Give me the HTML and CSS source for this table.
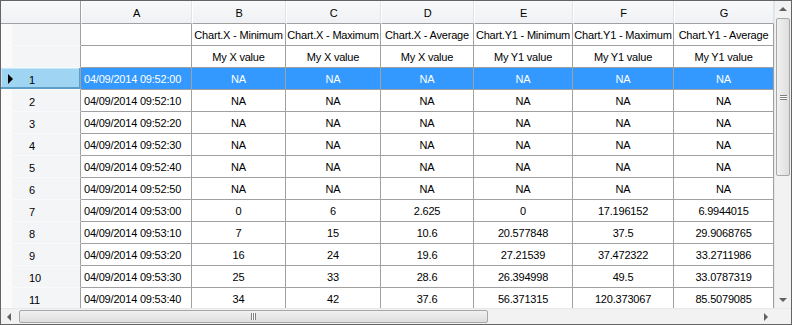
FILE: index.html
```html
<!DOCTYPE html>
<html lang="en">
<head>
    <meta charset="UTF-8">
    <title>Chart data grid</title>
    <link rel="stylesheet" href="styles.css">
</head>
<body>
    <div class="grid-view">
        <div class="grid-body">
            <div class="viewport">
                <div class="row col-head">
                    <div class="cell corner"></div>
                    <div class="cell">A</div>
                    <div class="cell">B</div>
                    <div class="cell">C</div>
                    <div class="cell">D</div>
                    <div class="cell">E</div>
                    <div class="cell">F</div>
                    <div class="cell">G</div>
                </div>
                <div class="row">
                    <div class="cell row-head"></div>
                    <div class="cell"></div>
                    <div class="cell">Chart.X - Minimum</div>
                    <div class="cell">Chart.X - Maximum</div>
                    <div class="cell">Chart.X - Average</div>
                    <div class="cell">Chart.Y1 - Minimum</div>
                    <div class="cell">Chart.Y1 - Maximum</div>
                    <div class="cell">Chart.Y1 - Average</div>
                </div>
                <div class="row">
                    <div class="cell row-head"></div>
                    <div class="cell"></div>
                    <div class="cell">My X value</div>
                    <div class="cell">My X value</div>
                    <div class="cell">My X value</div>
                    <div class="cell">My Y1 value</div>
                    <div class="cell">My Y1 value</div>
                    <div class="cell">My Y1 value</div>
                </div>
                <div class="row selected">
                    <div class="cell row-head"><span class="pointer"></span>1</div>
                    <div class="cell date">04/09/2014 09:52:00</div>
                    <div class="cell">NA</div><div class="cell">NA</div><div class="cell">NA</div>
                    <div class="cell">NA</div><div class="cell">NA</div><div class="cell">NA</div>
                </div>
                <div class="row">
                    <div class="cell row-head">2</div>
                    <div class="cell date">04/09/2014 09:52:10</div>
                    <div class="cell">NA</div><div class="cell">NA</div><div class="cell">NA</div>
                    <div class="cell">NA</div><div class="cell">NA</div><div class="cell">NA</div>
                </div>
                <div class="row">
                    <div class="cell row-head">3</div>
                    <div class="cell date">04/09/2014 09:52:20</div>
                    <div class="cell">NA</div><div class="cell">NA</div><div class="cell">NA</div>
                    <div class="cell">NA</div><div class="cell">NA</div><div class="cell">NA</div>
                </div>
                <div class="row">
                    <div class="cell row-head">4</div>
                    <div class="cell date">04/09/2014 09:52:30</div>
                    <div class="cell">NA</div><div class="cell">NA</div><div class="cell">NA</div>
                    <div class="cell">NA</div><div class="cell">NA</div><div class="cell">NA</div>
                </div>
                <div class="row">
                    <div class="cell row-head">5</div>
                    <div class="cell date">04/09/2014 09:52:40</div>
                    <div class="cell">NA</div><div class="cell">NA</div><div class="cell">NA</div>
                    <div class="cell">NA</div><div class="cell">NA</div><div class="cell">NA</div>
                </div>
                <div class="row">
                    <div class="cell row-head">6</div>
                    <div class="cell date">04/09/2014 09:52:50</div>
                    <div class="cell">NA</div><div class="cell">NA</div><div class="cell">NA</div>
                    <div class="cell">NA</div><div class="cell">NA</div><div class="cell">NA</div>
                </div>
                <div class="row">
                    <div class="cell row-head">7</div>
                    <div class="cell date">04/09/2014 09:53:00</div>
                    <div class="cell">0</div><div class="cell">6</div><div class="cell">2.625</div>
                    <div class="cell">0</div><div class="cell">17.196152</div><div class="cell">6.9944015</div>
                </div>
                <div class="row">
                    <div class="cell row-head">8</div>
                    <div class="cell date">04/09/2014 09:53:10</div>
                    <div class="cell">7</div><div class="cell">15</div><div class="cell">10.6</div>
                    <div class="cell">20.577848</div><div class="cell">37.5</div><div class="cell">29.9068765</div>
                </div>
                <div class="row">
                    <div class="cell row-head">9</div>
                    <div class="cell date">04/09/2014 09:53:20</div>
                    <div class="cell">16</div><div class="cell">24</div><div class="cell">19.6</div>
                    <div class="cell">27.21539</div><div class="cell">37.472322</div><div class="cell">33.2711986</div>
                </div>
                <div class="row">
                    <div class="cell row-head">10</div>
                    <div class="cell date">04/09/2014 09:53:30</div>
                    <div class="cell">25</div><div class="cell">33</div><div class="cell">28.6</div>
                    <div class="cell">26.394998</div><div class="cell">49.5</div><div class="cell">33.0787319</div>
                </div>
                <div class="row">
                    <div class="cell row-head">11</div>
                    <div class="cell date">04/09/2014 09:53:40</div>
                    <div class="cell">34</div><div class="cell">42</div><div class="cell">37.6</div>
                    <div class="cell">56.371315</div><div class="cell">120.373067</div><div class="cell">85.5079085</div>
                </div>
            </div>

            <div class="vscroll">
                <div class="arrow up"><span></span></div>
                <div class="track">
                    <div class="thumb"><span class="grip"></span></div>
                </div>
                <div class="arrow down"><span></span></div>
            </div>
        </div>

        <div class="hscroll">
            <div class="arrow left"><span></span></div>
            <div class="track">
                <div class="thumb"><span class="grip"></span></div>
            </div>
            <div class="arrow right"><span></span></div>
            <div class="scroll-corner"></div>
        </div>
    </div>
</body>
</html>
```

FILE: styles.css
```css
:root {
    --line: #a0a0a0;
    --head: #f4f5f7;
    --select: #3399ff;
    --track: #f2f2f2;
}

* {
    margin: 0;
    padding: 0;
    box-sizing: border-box;
}

body {
    background-color: #ffffff;
    font-family: 'Liberation Sans', Arial, sans-serif;
    font-size: 11px;
    color: #000000;
}

.grid-view {
    width: 792px;
    height: 325px;
    border: 1px solid #646464;
    display: flex;
    flex-direction: column;
    background-color: #ffffff;
}

.grid-body {
    display: flex;
    height: 307px;
}

.viewport {
    width: 773px;
    overflow: hidden;
}

.row {
    display: grid;
    grid-template-columns: 80px 111px 94px 95px 93px 99px 101px 100px;
    height: 22px;
}

.cell {
    display: flex;
    align-items: center;
    justify-content: center;
    white-space: nowrap;
    overflow: hidden;
    border-right: 1px solid var(--line);
    border-bottom: 1px solid var(--line);
    letter-spacing: -0.2px;
}

.cell.date {
    justify-content: flex-start;
    padding-left: 3px;
}

/* column headers */
.col-head {
    height: 23px;
}

.col-head .cell {
    background: linear-gradient(#f8f9fa, #eff1f4);
    border-right: 1px solid #dfe2e6;
    border-left: 1px solid #ffffff;
    padding-top: 1px;
}

.col-head .cell.corner {
    border-left: none;
    border-right: 1px solid var(--line);
}

/* row headers */
.cell.row-head {
    justify-content: flex-start;
    padding-left: 28px;
    padding-top: 3px;
    background: linear-gradient(to right, #fbfbfc 0, #fbfbfc 11px, var(--head) 11px);
    border-bottom: 1px solid #f9fafb;
    border-right: 1px solid var(--line);
    position: relative;
}

.selected .cell {
    background-color: var(--select);
    color: #ffffff;
}

.selected .cell.row-head {
    background: #9fd5f3;
    color: #000000;
    box-shadow: inset 0 -2px 0 #5c9fc6, inset -1px 0 0 #5c9fc6, inset 1px 1px 0 #c6e7f9;
}

.pointer {
    position: absolute;
    left: 7px;
    top: 6px;
    border-left: 5px solid #000000;
    border-top: 5px solid transparent;
    border-bottom: 5px solid transparent;
}

/* scrollbars */
.vscroll {
    width: 17px;
    display: flex;
    flex-direction: column;
    background-color: var(--track);
    border-left: 1px solid #e8e8e8;
}

.vscroll .track {
    flex: 1;
    padding: 0 1px;
}

.vscroll .thumb {
    height: 158px;
    margin-top: 1px;
    border: 1px solid #a7a7a7;
    border-radius: 2px;
    background: linear-gradient(to right, #f1f1f1, #dedede);
    display: flex;
    align-items: center;
    justify-content: center;
}

.vscroll .grip {
    width: 7px;
    height: 5px;
    border-top: 1px solid #7e7e7e;
    border-bottom: 1px solid #7e7e7e;
    background: linear-gradient(#ffffff 0 1px, #7e7e7e 1px 2px, #ffffff 2px) center / 100% 3px no-repeat;
}

.arrow {
    width: 16px;
    height: 16px;
    display: flex;
    align-items: center;
    justify-content: center;
}

.arrow span {
    display: block;
    width: 0;
    height: 0;
}

.arrow.up span {
    border-left: 4px solid transparent;
    border-right: 4px solid transparent;
    border-bottom: 4px solid #606060;
}

.arrow.down span {
    border-left: 4px solid transparent;
    border-right: 4px solid transparent;
    border-top: 4px solid #606060;
}

.arrow.left span {
    border-top: 4px solid transparent;
    border-bottom: 4px solid transparent;
    border-right: 4px solid #606060;
}

.arrow.right span {
    border-top: 4px solid transparent;
    border-bottom: 4px solid transparent;
    border-left: 4px solid #606060;
}

.hscroll {
    height: 16px;
    display: flex;
    background-color: var(--track);
    border-top: 1px solid #e8e8e8;
}

.hscroll .arrow {
    height: 15px;
}

.hscroll .track {
    width: 741px;
    padding: 1px 0;
}

.hscroll .thumb {
    width: 469px;
    height: 100%;
    margin-left: 2px;
    border: 1px solid #a7a7a7;
    border-radius: 2px;
    background: linear-gradient(#f1f1f1, #dedede);
    display: flex;
    align-items: center;
    justify-content: center;
}

.hscroll .grip {
    width: 5px;
    height: 7px;
    border-left: 1px solid #7e7e7e;
    border-right: 1px solid #7e7e7e;
    background: linear-gradient(to right, #ffffff 0 1px, #7e7e7e 1px 2px, #ffffff 2px) center / 3px 100% no-repeat;
}

.scroll-corner {
    width: 17px;
    background-color: var(--track);
}
```
